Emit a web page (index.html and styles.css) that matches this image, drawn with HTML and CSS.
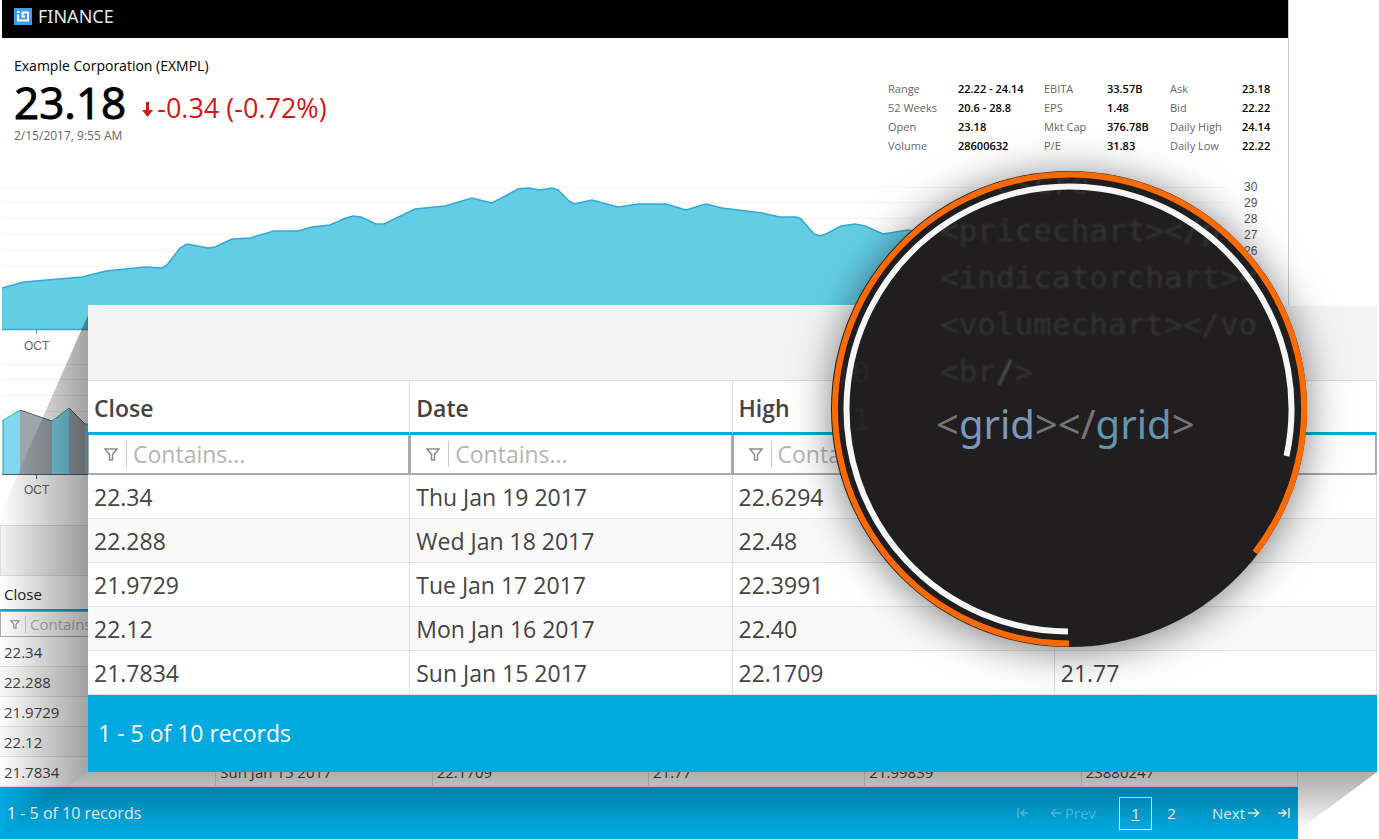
FILE: index.html
```html
<!DOCTYPE html>
<html lang="en">
<head>
<meta charset="utf-8">
<title>Finance</title>
<link rel="stylesheet" href="styles.css">
</head>
<body>
<div class="stage">
  <main class="dashboard">
    <header class="topbar">
      <svg class="logo" viewBox="0 0 18 17" aria-hidden="true"><rect width="18" height="17" fill="#3f9cf0"/><path d="M4 6.500V12.500H14V4.500H8.500V8.500H11" fill="none" stroke="#fff" stroke-width="2"/><rect x="3" y="3" width="2.500" height="2" fill="#fff"/></svg>
      <h1 class="brand">FINANCE</h1>
    </header>

    <section class="summary">
      <div class="quote">
        <h2 class="company">Example Corporation (EXMPL)</h2>
        <p class="price-line">
          <span class="price">23.18</span>
          <svg class="arrow" viewBox="0 0 11 15" aria-hidden="true"><path d="M4 0H7V8H11L5.500 15L0 8H4Z" fill="#c81e1e"/></svg>
          <span class="change">-0.34 (-0.72%)</span>
        </p>
        <p class="time">2/15/2017, 9:55 AM</p>
      </div>
      <dl class="stats">
        <dt>Range</dt><dd>22.22 - 24.14</dd><dt>EBITA</dt><dd>33.57B</dd><dt>Ask</dt><dd>23.18</dd>
        <dt>52 Weeks</dt><dd>20.6 - 28.8</dd><dt>EPS</dt><dd>1.48</dd><dt>Bid</dt><dd>22.22</dd>
        <dt>Open</dt><dd>23.18</dd><dt>Mkt Cap</dt><dd>376.78B</dd><dt>Daily High</dt><dd>24.14</dd>
        <dt>Volume</dt><dd>28600632</dd><dt>P/E</dt><dd>31.83</dd><dt>Daily Low</dt><dd>22.22</dd>
      </dl>
    </section>

    <section class="price-chart">
      <svg class="price-plot" viewBox="2 179 1224 156" preserveAspectRatio="none" aria-label="Price chart">
        <path d="M2 187.500H1226M2 202.500H1226M2 218.500H1226M2 234.500H1226M2 250.500H1226M2 266.500H1226M2 282.500H1226" stroke="#f4f4f4" fill="none"/>
        <path d="M2 288L24 282L82 277L106 271L145 267L162 268L167 265L180 248L187 244L208 248L215 247L232 239L250 238L274 231L298 231L312 227L330 225L346 218L353 216L361 217L376 224L384 224L415 209L445 206L472 198L492 203L518 189L528 188L540 190L552 188L558 190L569 201L574 204L592 200L618 207L638 204L666 204L686 210L706 204L722 208L762 213L780 217L796 217L801 219L814 234L820 236L826 234L841 226L855 224L865 226L883 234L908 230L930 234V330H2Z" fill="#63cde6"/>
        <path d="M2 288L24 282L82 277L106 271L145 267L162 268L167 265L180 248L187 244L208 248L215 247L232 239L250 238L274 231L298 231L312 227L330 225L346 218L353 216L361 217L376 224L384 224L415 209L445 206L472 198L492 203L518 189L528 188L540 190L552 188L558 190L569 201L574 204L592 200L618 207L638 204L666 204L686 210L706 204L722 208L762 213L780 217L796 217L801 219L814 234L820 236L826 234L841 226L855 224L865 226L883 234L908 230L930 234M2 329.500H930" fill="none" stroke="#31a9d2" stroke-width="1.500"/>
        <path d="M36.500 330V334" stroke="#888"/>
      </svg>
      <ol class="price-axis"><li>30</li><li>29</li><li>28</li><li>27</li><li>26</li></ol>
    </section>
    <p class="month">OCT</p>
    <section class="volume-chart">
      <svg class="volume-plot" viewBox="2 360 1224 119" preserveAspectRatio="none" aria-label="Volume chart">
        <path d="M2 364.500H1226M2 379.500H1226M2 395.500H1226M2 411.500H1226" stroke="#f0f0f0" fill="none"/>
        <path d="M2 421L20 410V474H2ZM52 421L69 408V474H52Z" fill="#81d8ee"/>
        <path d="M20 410L52 421V474H20ZM69 408L85 424V474H69Z" fill="#9da5ac"/>
        <path d="M85 424H110V474H85Z" fill="#81c4e4"/>
        <path d="M3.500 420V474" stroke="#999"/>
        <path d="M2 421L20 410M52 421L69 408M85 424H100" fill="none" stroke="#31a9d2"/>
        <path d="M20 410L52 421M69 408L85 424M2 474.500H100M36.500 475V479" fill="none" stroke="#555b61"/>
      </svg>
    </section>
    <p class="month">OCT</p>
  </main>

  <section class="records">
    <div class="records-bar"></div>
    <table class="grid">
      <thead>
        <tr><th>Close</th><th></th><th></th><th></th><th></th><th></th></tr>
        <tr class="filters">
          <td><label class="filter"><svg class="funnel" viewBox="0 0 14 13" aria-hidden="true"><path d="M1 1H13L8.500 6.500V12H5.500V6.500Z" fill="none" stroke="#8b8b8b" stroke-width="1.500"/></svg><input type="text" placeholder="Contains..." aria-label="Filter close"></label></td>
          <td></td><td></td><td></td><td></td><td></td>
        </tr>
      </thead>
      <tbody>
        <tr><td>22.34</td><td></td><td></td><td></td><td></td><td></td></tr>
        <tr><td>22.288</td><td></td><td></td><td></td><td></td><td></td></tr>
        <tr><td>21.9729</td><td></td><td></td><td></td><td></td><td></td></tr>
        <tr><td>22.12</td><td></td><td></td><td></td><td></td><td></td></tr>
        <tr><td>21.7834</td><td>Sun Jan 15 2017</td><td>22.1709</td><td>21.77</td><td>21.99839</td><td>23880247</td></tr>
      </tbody>
    </table>
    <footer class="pager">
      <span class="count">1 - 5 of 10 records</span>
      <nav class="pages" aria-label="Pages">
        <button class="step off" aria-label="First page" disabled><svg viewBox="0 0 12 10" class="glyph"><path d="M1 0V10M11 5H4M7.500 1.500L4 5L7.500 8.500" /></svg></button>
        <button class="step prev off" disabled><svg viewBox="0 0 12 10" class="glyph"><path d="M12 5H1.500M5.500 1L1.500 5L5.500 9"/></svg>Prev</button>
        <button class="page current">1</button>
        <button class="page">2</button>
        <button class="step next">Next<svg viewBox="0 0 12 10" class="glyph"><path d="M0 5H10.500M6.500 1L10.500 5L6.500 9"/></svg></button>
        <button class="step" aria-label="Last page"><svg viewBox="0 0 12 10" class="glyph"><path d="M11 0V10M0 5H8M4.500 1.500L8 5L4.500 8.500"/></svg></button>
      </nav>
    </footer>
  </section>

  <section class="panel">
    <div class="shade shade-left"></div>
    <div class="shade shade-bottom"></div>
    <div class="panel-bar"></div>
    <table class="grid large">
      <thead>
        <tr><th>Close</th><th>Date</th><th>High</th><th></th></tr>
        <tr class="filters">
          <td><label class="filter"><svg class="funnel" viewBox="0 0 14 13" aria-hidden="true"><path d="M1 1H13L8.500 6.500V12H5.500V6.500Z" fill="none" stroke="#8b8b8b" stroke-width="1.500"/></svg><input type="text" placeholder="Contains..." aria-label="Filter close, enlarged"></label></td>
          <td><label class="filter"><svg class="funnel" viewBox="0 0 14 13" aria-hidden="true"><path d="M1 1H13L8.500 6.500V12H5.500V6.500Z" fill="none" stroke="#8b8b8b" stroke-width="1.500"/></svg><input type="text" placeholder="Contains..." aria-label="Filter date"></label></td>
          <td><label class="filter"><svg class="funnel" viewBox="0 0 14 13" aria-hidden="true"><path d="M1 1H13L8.500 6.500V12H5.500V6.500Z" fill="none" stroke="#8b8b8b" stroke-width="1.500"/></svg><input type="text" placeholder="Contains..." aria-label="Filter high"></label></td>
          <td></td>
        </tr>
      </thead>
      <tbody>
        <tr><td>22.34</td><td>Thu Jan 19 2017</td><td>22.6294</td><td></td></tr>
        <tr><td>22.288</td><td>Wed Jan 18 2017</td><td>22.48</td><td></td></tr>
        <tr><td>21.9729</td><td>Tue Jan 17 2017</td><td>22.3991</td><td></td></tr>
        <tr><td>22.12</td><td>Mon Jan 16 2017</td><td>22.40</td><td></td></tr>
        <tr><td>21.7834</td><td>Sun Jan 15 2017</td><td>22.1709</td><td>21.77</td></tr>
      </tbody>
    </table>
    <footer class="panel-count">1 - 5 of 10 records</footer>
  </section>

  <aside class="lens">
    <div class="lens-face">
      <ol class="line-numbers"><li>9</li><li>10</li><li>11</li></ol>
      <pre class="code">  rescre
&lt;pricechart&gt;&lt;/p
&lt;indicatorchart&gt;&lt;
&lt;volumechart&gt;&lt;/vo
&lt;br<b>/</b>&gt;</pre>
      <code class="tag">&lt;<span class="open">grid</span>&gt;&lt;/<span class="close">grid</span>&gt;</code>
    </div>
    <svg class="rings" viewBox="0 0 476 476" aria-hidden="true">
      <path d="M238 472.500A234.500 234.500 0 1 1 424 381.500" fill="none" stroke="#ff6a00" stroke-width="6"/>
      <path d="M237 460.500A222.500 222.500 0 1 1 455.500 285" fill="none" stroke="#f6f6f6" stroke-width="6"/>
    </svg>
  </aside>
</div>
</body>
</html>
```
FILE: styles.css
```css
* { box-sizing: border-box; }
body, h1, h2, p, dl, dd, ol, pre { margin: 0; padding: 0; }
ol { list-style: none; }
body { background: #fff; font-family: "Open Sans", "Noto Sans", sans-serif; color: #444; }
button, input { font: inherit; color: inherit; background: none; border: 0; padding: 0; }

.stage { position: relative; overflow: hidden; }

.dashboard { margin: 0 90px 0 2px; border-right: 1px solid #ccc; }
.topbar { height: 38px; padding: 0 12px 6px; background: #000; display: flex; align-items: center; gap: 6px; }
.logo { width: 18px; height: 17px; }
.brand { font-family: "Noto Sans", sans-serif; font-size: 18px; line-height: 24px; font-weight: 400; color: #e8e8e8; }

.summary { height: 141px; padding: 18px 16px 0 12px; display: flex; justify-content: space-between; }
.company { font-size: 14px; line-height: 20px; font-weight: 500; color: #000; }
.price-line { display: flex; align-items: center; height: 52px; }
.price { font-size: 44px; line-height: 52px; font-weight: 500; color: #000; -webkit-text-stroke: 1px #000; }
.arrow { width: 11px; height: 15px; margin: 14px 4px 0 16px; }
.change { font-size: 27px; line-height: 36px; padding-top: 12px; color: #d31616; }
.time { font-size: 12px; line-height: 16px; color: #666; }
.stats { padding-top: 23px; display: grid; grid-template-columns: 70px 86px 63px 63px 72px 30px; grid-auto-rows: 19px; align-content: start; font-size: 11px; line-height: 19px; white-space: nowrap; }
.stats dt { color: #666; }
.stats dd { color: #000; font-weight: 600; }

.price-chart { display: flex; height: 156px; }
.price-plot { flex: 1; min-width: 0; height: 156px; }
.price-axis { width: 62px; padding-left: 18px; font-family: "Liberation Sans", sans-serif; font-size: 12px; line-height: 16px; color: #555; }
.month { height: 25px; padding: 3px 0 0 22px; font-family: "Liberation Sans", sans-serif; font-size: 12px; line-height: 16px; color: #666; }
.volume-chart { display: flex; height: 119px; padding-right: 62px; }
.volume-plot { flex: 1; min-width: 0; height: 119px; }

.records { margin: 21px 81px 0 0; }
.records-bar { height: 51px; background: #f2f2f2; border: 1px solid #ddd; }
.grid { width: 100%; table-layout: fixed; border-collapse: separate; border-spacing: 0; background: #fff; font-size: 15px; }
.grid th { height: 35px; padding: 2px 4px 0; text-align: left; font-weight: 500; color: #222; border-bottom: 2px solid #00aadf; }
.grid td { height: 30px; padding: 0 4px; white-space: nowrap; border-bottom: 1px solid #e2e2e2; border-right: 1px solid #ddd; }
.grid tbody tr:nth-child(even) { background: #f9f9f9; }
.grid .filters td { height: 26px; padding: 0; border: 1px solid #aaa; }
.filter { display: flex; align-items: center; height: 100%; padding-left: 9px; }
.funnel { width: 10px; height: 9px; flex: none; }
.filter input { flex: 1; min-width: 0; height: 17px; margin-left: 5px; padding-left: 4px; border-left: 1px solid #ccc; font-size: 15px; }
.filter input::placeholder { color: #b5b5b5; opacity: 1; }
.pager { height: 52px; padding: 0 8px 0 7px; background: #00aae0; color: #fff; font-size: 15px; display: flex; align-items: center; justify-content: space-between; }
.count { font-size: 16px; }
.pages { display: flex; align-items: center; }
.step { display: flex; align-items: center; gap: 3px; }
.off { opacity: 0.35; }
.prev { margin: 0 23px 0 21px; }
.page { width: 33px; height: 33px; border: 1px solid transparent; }
.current { border-color: #fff; text-decoration: underline; margin-right: 3px; }
.next { margin: 0 18px 0 24px; }
.glyph { width: 12px; height: 10px; fill: none; stroke: #fff; stroke-width: 1.500; }

.panel { position: absolute; top: 305px; left: 88px; right: 2px; }
.panel-bar { height: 76px; background: #f3f3f3; border-top: 1px solid #fff; border-bottom: 1px solid #ddd; }
.large { font-size: 23px; }
.large th { height: 54px; padding: 2px 6px 0; font-weight: 600; color: #444; border-bottom: 3px solid #00aadf; border-right: 1px solid #ddd; }
.large td { height: 44px; padding: 0 6px; }
.large .filters td { height: 40px; border-width: 0 2px 2px 1px; }
.large .filter { padding-left: 15px; }
.large .funnel { width: 14px; height: 13px; }
.large .filter input { height: 26px; margin-left: 8px; padding-left: 6px; font-size: 23px; }
.panel-count { height: 77px; padding-left: 10px; line-height: 76px; background: #00aae0; color: #fff; font-size: 23px; }

.shade { position: absolute; pointer-events: none; }
.shade-left { top: 10px; bottom: -67px; right: 100%; width: 88px; background: linear-gradient(to right, rgba(0,0,0,0), rgba(0,0,0,0.36)); clip-path: polygon(100% 0, 0 38%, 0 100%, 100% calc(100% - 67px)); }
.shade-bottom { top: 100%; left: -88px; right: 0; height: 67px; background: linear-gradient(rgba(0,0,0,0.32), rgba(0,0,0,0.26) 20%, rgba(0,0,0,0) 90%); clip-path: polygon(88px 0, 100% 0, calc(100% - 90px) 100%, 0 100%); }

.lens { position: absolute; top: 171px; right: 72px; width: 476px; height: 476px; }
.lens-face { height: 100%; border-radius: 50%; background: #201e1f; overflow: hidden; display: grid; grid-template-columns: 105px 1fr; grid-template-rows: 229px 1fr; box-shadow: 0 4px 40px rgba(0,0,0,0.5); }
.line-numbers, .code { font-family: "DejaVu Sans Mono", monospace; font-size: 31px; line-height: 47px; filter: blur(1px); }
.line-numbers { padding: 131px 0 0 2px; color: #292829; height: 290px; }
.code { margin-top: -11px; padding-left: 4px; color: #363536; }
.code b { font-weight: 400; color: #555; }
.tag { grid-column: 2; font-family: "Noto Sans", sans-serif; font-size: 40px; line-height: 48px; color: #747474; white-space: nowrap; }
.open { color: #7b98b8; }
.close { color: #6394b0; }
.rings { position: absolute; inset: 0; width: 100%; height: 100%; }
```
